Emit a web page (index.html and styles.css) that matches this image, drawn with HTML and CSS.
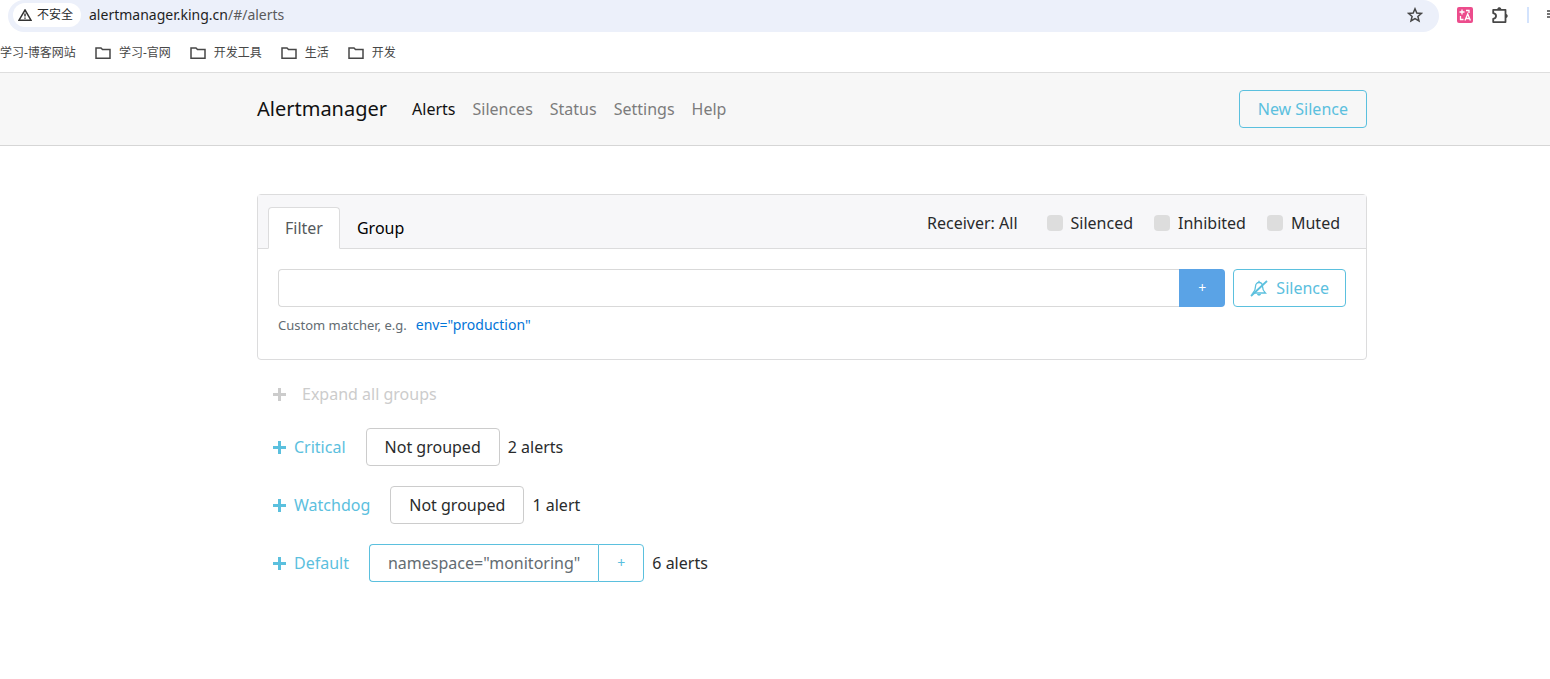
FILE: index.html
```html
<!DOCTYPE html>
<html lang="en">
<head>
    <meta charset="UTF-8">
    <meta name="viewport" content="width=device-width, initial-scale=1.0">
    <title>Alertmanager</title>
    <link rel="stylesheet" href="styles.css">
</head>
<body>
    <!-- Browser bar -->
    <div class="browser">
        <div class="toolbar">
            <div class="address">
                <button type="button" class="security">
                    <svg width="14" height="12" viewBox="0 0 14 12" fill="none" stroke="#333" stroke-width="1.5"><path d="M7 1L13 11.2H1Z"/><path d="M7 4.5v3M7 8.5v1.2"/></svg>
                    不安全
                </button>
                <span class="url">alertmanager.king.cn<span class="url-path">/#/alerts</span></span>
                <button type="button" class="star" aria-label="Bookmark">
                    <svg width="16" height="16" viewBox="0 0 16 16" fill="none" stroke="#474747" stroke-width="1.5"><path d="M8 1.8l1.8 4.2 4.6.4-3.5 3 1.1 4.5L8 11.5l-4 2.4 1.1-4.5-3.5-3 4.6-.4z"/></svg>
                </button>
            </div>
            <div class="extensions">
                <button type="button" aria-label="Translate">
                    <svg width="16" height="16" viewBox="0 0 16 16"><rect width="16" height="16" rx="2" fill="#ec4c8c"/><g fill="none" stroke="#fff" stroke-width="1.3"><path d="M5 2.5v5M2.5 5h5M9 3.5h3V6M3.500 9v3.500h3M8 13.500L10.700 7l2.700 6.500M9 11.500h3.400"/></g></svg>
                </button>
                <button type="button" aria-label="Extensions">
                    <svg width="18" height="18" viewBox="0 0 18 18" fill="none" stroke="#474747" stroke-width="1.8"><path d="M2.200 3.800h12.300v12.300H2.200v-3.300c3.800-.8 3.800-4.800 0-5.600z" stroke-linejoin="round"/><path d="M6.300 3c.3-2.300 3.700-2.300 4 0zM15 8c2.300.3 2.300 3.700 0 4z" fill="#474747" stroke="none"/></svg>
                </button>
                <span class="divider"></span>
                <button type="button" aria-label="Media">
                    <svg width="16" height="16" viewBox="0 0 16 16" fill="none" stroke="#474747" stroke-width="1.5"><path d="M0 4h10M0 7h10M0 10h6"/></svg>
                </button>
            </div>
        </div>
        <div class="bookmarks">
            <a href="#">学习-博客网站</a>
            <a href="#"><svg class="folder" viewBox="0 0 16 12"><path d="M1 1h5l1.500 1.500H15v8.700H1z"/></svg>学习-官网</a>
            <a href="#"><svg class="folder" viewBox="0 0 16 12"><path d="M1 1h5l1.500 1.500H15v8.700H1z"/></svg>开发工具</a>
            <a href="#"><svg class="folder" viewBox="0 0 16 12"><path d="M1 1h5l1.500 1.500H15v8.700H1z"/></svg>生活</a>
            <a href="#"><svg class="folder" viewBox="0 0 16 12"><path d="M1 1h5l1.500 1.500H15v8.700H1z"/></svg>开发</a>
        </div>
    </div>

    <header>
        <nav class="container">
            <a href="#" class="brand">Alertmanager</a>
            <a href="#" class="nav-link active">Alerts</a>
            <a href="#" class="nav-link">Silences</a>
            <a href="#" class="nav-link">Status</a>
            <a href="#" class="nav-link">Settings</a>
            <a href="#" class="nav-link">Help</a>
            <a href="#" class="btn btn-info new-silence">New Silence</a>
        </nav>
    </header>

    <main>
        <div class="container">
            <!-- Filter card -->
            <div class="card">
                <div class="card-header">
                    <div class="tabs">
                        <a href="#" class="tab active">Filter</a>
                        <a href="#" class="tab">Group</a>
                    </div>
                    <div class="options">
                        <button type="button" class="receiver">Receiver: All</button>
                        <label><input type="checkbox">Silenced</label>
                        <label><input type="checkbox">Inhibited</label>
                        <label><input type="checkbox">Muted</label>
                    </div>
                </div>
                <div class="card-body">
                    <div class="filter-row">
                        <div class="input-group">
                            <input type="text" id="matcher">
                            <button type="button" class="btn btn-primary small-plus">+</button>
                        </div>
                        <a href="#" class="btn btn-info silence">
                            <svg width="18" height="18" viewBox="0 0 18 18" fill="none" stroke="#5bc0de" stroke-width="1.3"><path d="M3 14c2-2 2.500-3.500 2.500-6.500C5.500 5 7 3.500 9 3.500s3.500 1.500 3.500 4c0 3 .9 4.500 2.900 6.500z"/><path d="M9 1.800v1.700"/><path d="M7 15h4c-.3 2.300-3.700 2.300-4 0z" fill="#5bc0de" stroke="none"/><path d="M1 17L17 2" stroke-width="1.8"/></svg>
                            Silence
                        </a>
                    </div>
                    <div class="help">
                        <label for="matcher">Custom matcher, e.g.</label>
                        <button type="button" class="example">env="production"</button>
                    </div>
                </div>
            </div>

            <!-- Alert groups -->
            <div class="groups">
                <button type="button" class="toggle expand-all"><svg class="plus" viewBox="0 0 13 13"><path d="M5 0h3v5h5v3H8v5H5V8H0V5h5z"/></svg>Expand all groups</button>
                <div class="group">
                    <button type="button" class="toggle"><svg class="plus" viewBox="0 0 13 13"><path d="M5 0h3v5h5v3H8v5H5V8H0V5h5z"/></svg>Critical</button>
                    <span class="btn btn-secondary">Not grouped</span>
                    <span>2 alerts</span>
                </div>
                <div class="group">
                    <button type="button" class="toggle"><svg class="plus" viewBox="0 0 13 13"><path d="M5 0h3v5h5v3H8v5H5V8H0V5h5z"/></svg>Watchdog</button>
                    <span class="btn btn-secondary">Not grouped</span>
                    <span>1 alert</span>
                </div>
                <div class="group">
                    <button type="button" class="toggle"><svg class="plus" viewBox="0 0 13 13"><path d="M5 0h3v5h5v3H8v5H5V8H0V5h5z"/></svg>Default</button>
                    <div class="btn-group">
                        <span class="btn btn-info matcher">namespace="monitoring"</span>
                        <button type="button" class="btn btn-info small-plus">+</button>
                    </div>
                    <span>6 alerts</span>
                </div>
            </div>
        </div>
    </main>
</body>
</html>
```

FILE: styles.css
```css
:root {
    --info: #5bc0de;
    --border: #dcdcdd;
    --text: #292b2c;
    --muted: #636c72;
}

* {
    margin: 0;
    padding: 0;
    box-sizing: border-box;
}

body {
    font-family: "Noto Sans", "Noto Sans CJK SC", sans-serif;
    font-size: 16px;
    line-height: 24px;
    color: var(--text);
    background-color: #fff;
    overflow-x: hidden;
}

a {
    text-decoration: none;
    color: inherit;
}

button,
input {
    font: inherit;
    color: inherit;
    background: none;
    border: none;
}

button {
    cursor: pointer;
}

svg {
    flex: none;
    display: block;
}

/* Browser bar */
.browser {
    height: 73px;
    border-bottom: 1px solid #dedede;
    font-size: 14px;
    overflow: hidden;
}

.toolbar {
    display: flex;
    height: 32px;
    padding-left: 8px;
}

.address {
    flex: 1;
    display: flex;
    align-items: center;
    padding: 0 16px 2px 5px;
    background-color: #ecf0fa;
    border-radius: 16px;
}

.security {
    display: flex;
    align-items: center;
    gap: 5px;
    height: 24px;
    padding: 0 8px 0 5px;
    border-radius: 12px;
    background-color: #fff;
    font-size: 12px;
}

.url {
    margin-left: 8px;
    color: #1f1f1f;
}

.url-path {
    color: #5a5a5a;
}

.star {
    margin-left: auto;
}

.extensions {
    flex: none;
    display: flex;
    align-items: center;
    width: 111px;
    padding: 0 0 2px 18px;
    gap: 18px;
}

.divider {
    flex: none;
    width: 2px;
    height: 16px;
    background-color: #d3e3fd;
}

.bookmarks {
    display: flex;
    gap: 19px;
    padding-top: 9px;
    font-size: 12px;
    color: #474747;
}

.bookmarks a {
    display: flex;
    align-items: center;
    gap: 8px;
}

.folder {
    width: 16px;
    height: 12px;
    fill: none;
    stroke: #474747;
    stroke-width: 1.5;
}

/* Navigation */
header,
main {
    padding-left: 74px;
}

.container {
    width: 90%;
    max-width: 1110px;
    margin: 0 auto;
}

header {
    padding-top: 17px;
    padding-bottom: 17px;
    background-color: #f7f7f7;
    border-bottom: 1px solid #d6d6d6;
}

nav {
    display: flex;
    align-items: center;
    gap: 17px;
}

.brand {
    margin-right: 8px;
    font-size: 20px;
    color: #111;
}

.nav-link {
    color: #7c7c7c;
}

.nav-link.active {
    color: #111;
}

.new-silence {
    margin-left: auto;
}

.btn {
    display: inline-flex;
    align-items: center;
    justify-content: center;
    height: 38px;
    padding: 0 18px;
    border: 1px solid transparent;
    border-radius: 4px;
}

.btn-info {
    color: var(--info);
    border-color: var(--info);
}

.btn-secondary {
    border-color: #ccc;
}

.btn-primary {
    color: #fff;
    background-color: #5aa3e6;
}

.small-plus {
    width: 46px;
    font-size: 14px;
}

/* Filter card */
main {
    padding-top: 48px;
}

.card {
    border: 1px solid var(--border);
    border-radius: 4px;
}

.card-header {
    display: flex;
    justify-content: space-between;
    padding: 12px 26px 0 10px;
    background-color: #f7f7f9;
    border-bottom: 1px solid var(--border);
}

.tabs {
    display: flex;
    margin-bottom: -1px;
}

.tab {
    padding: 8px 16px;
    border: 1px solid transparent;
    border-radius: 4px 4px 0 0;
    color: #000;
}

.tab.active {
    color: #55595c;
    background-color: #fff;
    border-color: var(--border);
    border-bottom-color: #fff;
}

.options {
    display: flex;
    align-items: center;
    gap: 21px;
    padding-bottom: 10px;
}

.receiver {
    margin-right: 8px;
}

.options label {
    display: flex;
    align-items: center;
    gap: 8px;
}

.options input {
    appearance: none;
    width: 16px;
    height: 16px;
    border-radius: 4px;
    background-color: #ddd;
}

.card-body {
    padding: 20px;
}

.filter-row {
    display: flex;
    gap: 8px;
}

.input-group {
    flex: 1;
    display: flex;
}

.input-group input {
    flex: 1;
    min-width: 0;
    height: 38px;
    padding: 0 12px;
    border: 1px solid #d9d9d9;
    border-right: none;
    border-radius: 4px 0 0 4px;
}

.input-group .btn {
    border-radius: 0 4px 4px 0;
}

.silence {
    gap: 8px;
    padding: 0 16px;
}

.help {
    display: flex;
    align-items: center;
    gap: 9px;
    padding: 6px 0 2px;
    font-size: 13px;
    color: var(--muted);
}

.example {
    font-size: 14px;
    color: #0275d8;
}

/* Alert groups */
.groups {
    display: flex;
    flex-direction: column;
    align-items: flex-start;
    gap: 20px;
    padding: 22px 16px;
}

.group {
    display: flex;
    align-items: center;
    gap: 8px;
}

.toggle {
    display: flex;
    align-items: center;
    gap: 8px;
    margin-right: 12px;
    color: var(--info);
}

.expand-all {
    gap: 16px;
    margin-bottom: 2px;
    color: #ccc;
}

.plus {
    width: 13px;
    height: 13px;
    fill: currentColor;
}

.btn-group {
    display: flex;
}

.btn-group .matcher {
    color: var(--muted);
    border-right: none;
    border-radius: 4px 0 0 4px;
}

.btn-group .small-plus {
    border-radius: 0 4px 4px 0;
}
```
